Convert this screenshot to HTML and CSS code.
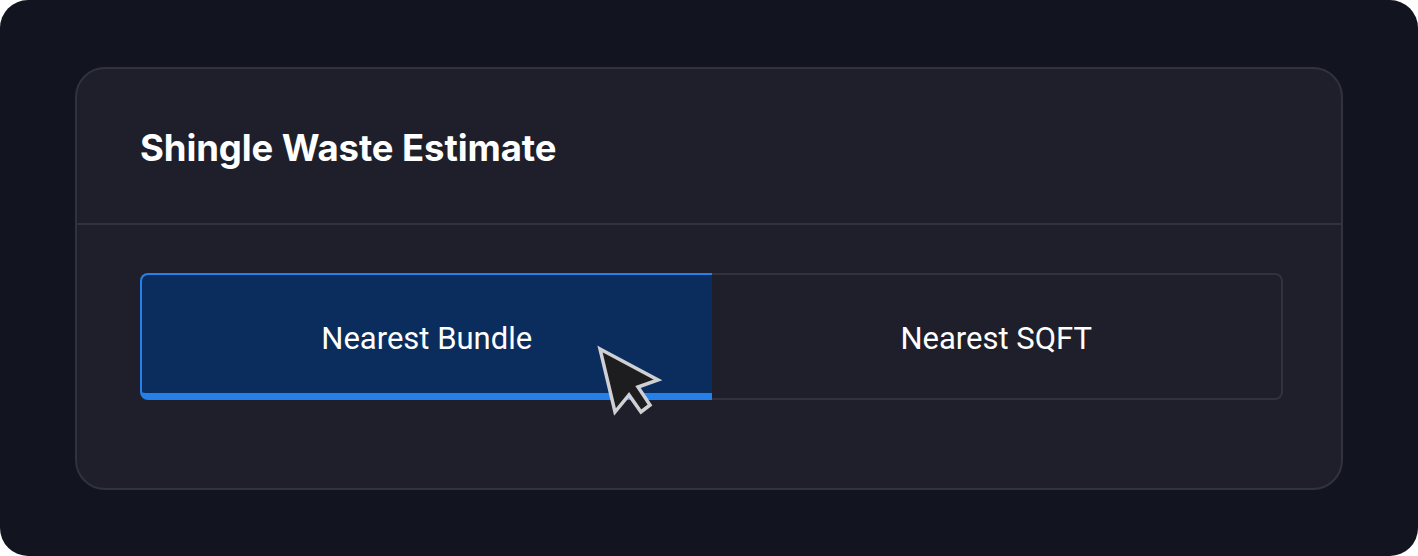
FILE: index.html
```html
<!DOCTYPE html>
<html>
<head>
<meta charset="utf-8">
<link rel="stylesheet" href="styles.css">
</head>
<body>
<div class="frame">
  <div class="card">
    <div class="card-header">
      <h1 class="title">Shingle Waste Estimate</h1>
    </div>
    <div class="card-body">
      <div class="toggle">
        <button class="opt opt-active">Nearest Bundle</button>
        <button class="opt">Nearest SQFT</button>
        <svg class="cursor" width="72" height="80" viewBox="0 0 72 80">
          <path d="M5 5 L63 36 L43 43 L55 61 L46 68 L34 51 L20 68 Z" fill="#1d1d1f" stroke="#cfd0d3" stroke-width="3.5" stroke-linejoin="miter"/>
        </svg>
      </div>
    </div>
  </div>
</div>
</body>
</html>
```

FILE: styles.css
```css
html, body {
  margin: 0;
  padding: 0;
  background: #ffffff;
}
body {
  font-family: Roboto, "Liberation Sans", sans-serif;
}
.frame {
  width: 1418px;
  height: 556px;
  box-sizing: border-box;
  background: #121420;
  border-radius: 28px;
  padding: 67px 75px 66px 75px;
}
.card {
  height: 100%;
  box-sizing: border-box;
  background: #1e1f2b;
  border: 2px solid #31323e;
  border-radius: 30px;
  display: flex;
  flex-direction: column;
}
.card-header {
  height: 156px;
  box-sizing: border-box;
  border-bottom: 2px solid #31323e;
  display: flex;
  align-items: center;
  padding: 0 63px;
}
.title {
  margin: 0;
  padding-top: 4px;
  color: #ffffff;
  font-family: Inter, Roboto, sans-serif;
  font-weight: 700;
  font-size: 36.5px;
  letter-spacing: -0.1px;
}
.card-body {
  padding: 48px 58px 0 63px;
}
.toggle {
  position: relative;
  display: flex;
  height: 127px;
}
.opt {
  flex: 1;
  margin: 0;
  font-family: Roboto, sans-serif;
  font-size: 31px;
  color: #ffffff;
  background: #1e1f2b;
  border: 2px solid #31323e;
  border-left: none;
  border-radius: 0 8px 8px 0;
  padding: 3px 0 0 0;
  cursor: default;
}
.opt-active {
  background: #0a2d5d;
  border: 2px solid #2680ea;
  border-bottom: 7px solid #2680ea;
  border-right: none;
  border-radius: 8px 0 0 8px;
  padding-top: 8px;
}
.cursor {
  position: absolute;
  left: 455px;
  top: 71px;
}
```
